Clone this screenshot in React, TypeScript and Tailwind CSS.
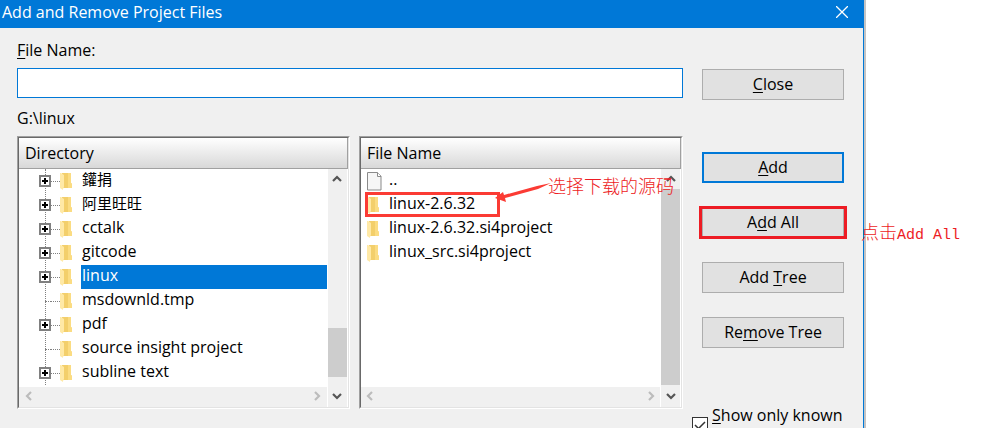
import { useState } from "react";
import type { ReactNode } from "react";
import clsx from "clsx";

const DIRECTORIES = [
  { name: "鑵捐", expandable: true, cjk: true },
  { name: "阿里旺旺", expandable: true, cjk: true },
  { name: "cctalk", expandable: true },
  { name: "gitcode", expandable: true },
  { name: "linux", expandable: true },
  { name: "msdownld.tmp", expandable: false },
  { name: "pdf", expandable: true },
  { name: "source insight project", expandable: false },
  { name: "subline text", expandable: true },
];

const FILES = [
  { name: "..", folder: false },
  { name: "linux-2.6.32", folder: true, marked: true },
  { name: "linux-2.6.32.si4project", folder: true },
  { name: "linux_src.si4project", folder: true },
];

function FolderIcon() {
  return (
    <svg width="13" height="18" viewBox="0 0 13 18" className="shrink-0">
      <path d="M2 1h9v10l1 1v4H2z" fill="#f3cf6b" />
      <path d="M8 1h3v10l1 1v4H8z" fill="#fbdc82" />
      <path d="M0 1h1l3 2v12l-1 2v1L0 16z" fill="#ffe9a6" />
    </svg>
  );
}

function FileIcon() {
  return (
    <svg width="16" height="20" viewBox="0 0 16 20" className="shrink-0">
      <path d="M.5 1.5h10l3.500 3.500v14H.5z" fill="#f6f6f6" stroke="#8a8a8a" />
      <path d="M10.500 1.500v4h3.500" fill="#fff" stroke="#8a8a8a" />
    </svg>
  );
}

const CHEVRONS = {
  up: "M1 8l4-4 4 4",
  down: "M1 3l4 4 4-4",
  left: "M7 1L3 5l4 4",
  right: "M3 1l4 4L3 9",
};

function ScrollButton({ dir }: { dir: keyof typeof CHEVRONS }) {
  const vertical = dir === "up" || dir === "down";
  return (
    <button
      aria-label={`Scroll ${dir}`}
      className="flex h-5 w-[19px] shrink-0 items-center justify-center"
    >
      <svg width="10" height="12" viewBox="0 0 10 12" fill="none">
        <path
          d={CHEVRONS[dir]}
          stroke={vertical ? "#555" : "#bcbcbc"}
          strokeWidth="2.200"
        />
      </svg>
    </button>
  );
}

type PanelProps = {
  title: string;
  className: string;
  thumb: ReactNode;
  children: ReactNode;
};

function ListPanel({ title, className, thumb, children }: PanelProps) {
  return (
    <section
      className={clsx(
        "min-w-0 border border-t-[#a0a0a0] border-r-white border-b-white border-l-[#a0a0a0]",
        className
      )}
    >
      <div className="border border-t-[#696969] border-r-[#e3e3e3] border-b-[#e3e3e3] border-l-[#696969]">
        <h2 className="flex h-[31px] items-center border-r border-b border-[#a0a0a0] bg-linear-to-b from-white to-[#d8d8d8] pl-1.5">
          {title}
        </h2>
        <div className="flex h-[238px] bg-white">
          <div className="mr-px flex min-w-0 flex-1 flex-col">
            <div className="relative flex-1">{children}</div>
            <div className="flex justify-between bg-[#f0f0f0]">
              <ScrollButton dir="left" />
              <ScrollButton dir="right" />
            </div>
          </div>
          <div className="mr-px flex w-[19px] flex-col bg-[#f0f0f0]">
            <ScrollButton dir="up" />
            <div className="flex flex-1 flex-col">{thumb}</div>
            <ScrollButton dir="down" />
          </div>
        </div>
      </div>
    </section>
  );
}

function DialogButton({
  children,
  primary,
}: {
  children: ReactNode;
  primary?: boolean;
}) {
  return (
    <button
      className={clsx(
        "block h-[31px] w-full bg-[#e1e1e1] pb-0.5",
        primary ? "border-2 border-[#0078d7]" : "border border-[#adadad]"
      )}
    >
      {children}
    </button>
  );
}

function Key({ children }: { children: ReactNode }) {
  return <span className="underline underline-offset-2">{children}</span>;
}

export default function App() {
  const [fileName, setFileName] = useState("");
  const [selected, setSelected] = useState("linux");
  const [knownOnly, setKnownOnly] = useState(true);

  return (
    <main className="flex h-screen overflow-hidden bg-white font-['Open_Sans','Noto_Sans_CJK_SC',sans-serif] text-base/5 text-black">
      <div className="min-w-0 flex-1 border-r-2 border-[#c4c4c4]">
        <div className="min-h-full border-r border-[#0078d7] bg-[#f0f0f0]">
          <header className="flex h-7 items-center justify-between bg-[#0078d7] pr-[15px] pl-0.5 text-white">
            <h1 className="pb-1">Add and Remove Project Files</h1>
            <button aria-label="Close dialog" className="pb-1">
              <svg
                width="12"
                height="12"
                viewBox="0 0 12 12"
                stroke="#fff"
                strokeWidth="1.300"
              >
                <path d="M0 0l12 12M12 0L0 12" />
              </svg>
            </button>
          </header>

          <div className="flex gap-[19px] pr-[19px] pl-[17px]">
            <div className="min-w-0 flex-1 pt-3">
              <label htmlFor="file-name" className="block">
                <Key>F</Key>ile Name:
              </label>
              <input
                id="file-name"
                value={fileName}
                onChange={(e) => setFileName(e.target.value)}
                className="mt-2 block h-[30px] w-full border border-[#0078d7] bg-white px-1 outline-none"
              />
              <p className="mt-2.5">G:\linux</p>

              <div className="mt-2 flex gap-[9px]">
                <ListPanel
                  title="Directory"
                  className="flex-[333]"
                  thumb={<div className="mt-auto mb-2.5 h-[49px] bg-[#cdcdcd]" />}
                >
                  <div className="absolute top-0 bottom-0.5 left-[26px] border-l border-dotted border-[#808080]" />
                  <ul className="relative">
                    {DIRECTORIES.map((dir) => (
                      <li
                        key={dir.name}
                        className="relative flex h-6 items-center pl-5"
                      >
                        {dir.expandable ? (
                          <button
                            aria-label={`Expand ${dir.name}`}
                            className="flex size-3 shrink-0 items-center justify-center border-2 border-[#808080] bg-white"
                          >
                            <svg width="6" height="6" viewBox="0 0 6 6">
                              <path d="M2 0h2v2h2v2H4v2H2V4H0V2h2z" />
                            </svg>
                          </button>
                        ) : (
                          <span className="ml-1.5 w-1.5 border-t border-dotted border-[#808080]" />
                        )}
                        <span className="w-[9px] border-t border-dotted border-[#808080]" />
                        <FolderIcon />
                        <button
                          onClick={() => setSelected(dir.name)}
                          className={clsx(
                            "ml-2 h-6 min-w-0 flex-1 truncate pb-1 pl-px text-left",
                            dir.cjk && "text-[15px]",
                            dir.name === selected && "bg-[#0078d7] text-white"
                          )}
                        >
                          {dir.name}
                        </button>
                      </li>
                    ))}
                  </ul>
                </ListPanel>

                <ListPanel
                  title="File Name"
                  className="flex-[324]"
                  thumb={<div className="mb-0.5 flex-1 bg-[#cdcdcd]" />}
                >
                  <ul>
                    {FILES.map((file) => (
                      <li
                        key={file.name}
                        className="relative flex h-6 items-center pl-1.5"
                      >
                        <span className="w-[22px]">
                          {file.folder ? <FolderIcon /> : <FileIcon />}
                        </span>
                        <span className="pb-1">{file.name}</span>
                        {file.marked && (
                          <div className="absolute -top-px left-1 h-[25px] w-[135px] border-3 border-[#fb3b34]" />
                        )}
                      </li>
                    ))}
                  </ul>
                  <svg
                    width="68"
                    height="24"
                    viewBox="0 0 68 24"
                    className="absolute top-2.5 left-[134px]"
                    fill="#fb3b34"
                  >
                    <path d="M0 19l8-6 1 3 33-9 14-3-13 6-33 9 1 4z" />
                  </svg>
                  <p className="absolute top-1 left-[187px] font-['Noto_Sans_CJK_SC',sans-serif] text-lg/6 font-light whitespace-nowrap text-[#ed1c24]">
                    选择下载的源码
                  </p>
                </ListPanel>
              </div>
            </div>

            <div className="flex w-[142px] shrink-0 flex-col pt-[41px]">
              <DialogButton>
                <Key>C</Key>lose
              </DialogButton>
              <div className="mt-[52px] flex flex-col gap-6">
                <DialogButton primary>
                  <Key>A</Key>dd
                </DialogButton>
                <div className="relative">
                  <DialogButton>
                    A<Key>d</Key>d All
                  </DialogButton>
                  <div className="pointer-events-none absolute -inset-x-[3px] -top-px -bottom-px border-3 border-[#ed1c24]" />
                  <p className="absolute top-3 left-full ml-[17px] font-['Noto_Sans_CJK_SC',sans-serif] text-lg/6 font-light whitespace-nowrap text-[#ed1c24]">
                    点击
                    <span className="font-['Liberation_Mono',monospace] text-[15px] font-normal">
                      Add All
                    </span>
                  </p>
                </div>
                <DialogButton>
                  Add <Key>T</Key>ree
                </DialogButton>
                <DialogButton>
                  Re<Key>m</Key>ove Tree
                </DialogButton>
              </div>
              <label className="mt-[57px] -ml-2.5 flex gap-1 whitespace-nowrap">
                <span className="relative mt-3 size-4 shrink-0">
                  <input
                    type="checkbox"
                    checked={knownOnly}
                    onChange={(e) => setKnownOnly(e.target.checked)}
                    className="peer block size-4 appearance-none border border-[#333] bg-white"
                  />
                  <svg
                    viewBox="0 0 16 16"
                    fill="none"
                    stroke="#333"
                    strokeWidth="1.500"
                    className="pointer-events-none absolute inset-0 hidden peer-checked:block"
                  >
                    <path d="M3 8l3.500 3.500L13 5" />
                  </svg>
                </span>
                <span>
                  <Key>S</Key>how only known
                </span>
              </label>
            </div>
          </div>
        </div>
      </div>
      <div className="w-[14%] shrink-0" />
    </main>
  );
}
